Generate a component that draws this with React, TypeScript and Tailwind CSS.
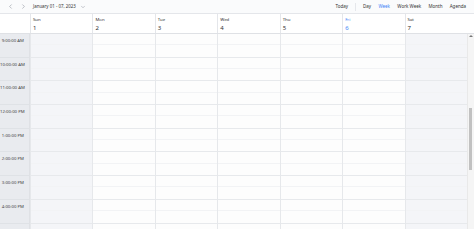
import { ChevronLeft, ChevronRight, ChevronDown } from "lucide-react";

const days = [
  { name: "Sun", date: 1, weekend: true },
  { name: "Mon", date: 2 },
  { name: "Tue", date: 3 },
  { name: "Wed", date: 4 },
  { name: "Thu", date: 5 },
  { name: "Fri", date: 6, today: true },
  { name: "Sat", date: 7, weekend: true },
];

const hours = [
  "9:00:00 AM",
  "10:00:00 AM",
  "11:00:00 AM",
  "12:00:00 PM",
  "1:00:00 PM",
  "2:00:00 PM",
  "3:00:00 PM",
  "4:00:00 PM",
  "",
];

const views = ["Day", "Week", "Work Week", "Month", "Agenda"];

export default function App() {
  return (
    <div className="w-[474px] h-[229px] overflow-hidden bg-white text-[#333] font-['Noto_Sans',sans-serif] flex flex-col">
      {/* Toolbar */}
      <div className="h-[14px] shrink-0 flex items-center border-b border-[#e4e6ea] bg-[#fafbfc]">
        <div className="flex items-center pl-[7px] gap-[6px] text-[#6b7280]">
          <ChevronLeft size={7} strokeWidth={1.5} />
          <ChevronRight size={7} strokeWidth={1.5} />
        </div>
        <span className="ml-[6px] text-[4.4px] leading-none">January 01 - 07, 2023</span>
        <ChevronDown size={6} strokeWidth={1.5} className="ml-[4px] text-[#6b7280]" />
        <div className="ml-auto flex items-center text-[4.5px] leading-none pr-[8px]">
          <span className="mr-[7px]">Today</span>
          <span className="w-px h-[8px] bg-[#e5e7eb] mr-[7px]" />
          <div className="flex items-center gap-[7.3px]">
            {views.map((v) => (
              <span key={v} className={v === "Week" ? "text-[#3b82f6]" : ""}>
                {v}
              </span>
            ))}
          </div>
        </div>
      </div>

      {/* Header */}
      <div className="h-[20px] shrink-0 grid grid-cols-[30px_repeat(7,1fr)_7px] border-b border-[#dfe1e5]">
        <div />
        {days.map((d) => (
          <div
            key={d.name}
            className={`border-l border-[#e4e6ea] pl-[2px] pt-[3px] flex flex-col ${d.today ? "text-[#3b82f6]" : ""}`}
          >
            <span className="text-[4.3px] leading-none">{d.name}</span>
            <span className="text-[6px] leading-none mt-[4px]">{d.date}</span>
          </div>
        ))}
        <div />
      </div>

      {/* Body */}
      <div className="flex-1 min-h-0 grid grid-cols-[30px_repeat(7,1fr)_7px] overflow-hidden">
        <div className="bg-[#e9ebef] border-r border-[#dfe1e5]">
          {hours.map((h, i) => (
            <div key={i} className="h-[23.7px] pt-[4px] pr-[5px] text-right whitespace-nowrap text-[4.3px] leading-none text-[#444] border-b border-[#dfe2e6]">
              {h}
            </div>
          ))}
        </div>
        {days.map((d) => (
          <div
            key={d.name}
            className={`border-l border-[#e6e8eb] ${d.weekend ? "bg-[#f4f5f8]" : "bg-[#fdfdfd]"}`}
          >
            {hours.map((_, i) => (
              <div key={i} className="h-[23.7px] flex flex-col border-b border-[#e7e9ec]">
                <div className="h-1/2 border-b border-[#f2f3f5]" />
                <div className="h-1/2" />
              </div>
            ))}
          </div>
        ))}
        <div className="bg-[#f5f5f5] relative border-l border-[#e9e9e9]">
          <div className="absolute left-[1px] top-[1px] w-0 h-0 border-l-[2px] border-r-[2px] border-b-[2px] border-l-transparent border-r-transparent border-b-[#777]" />
          <div className="absolute left-[1px] right-[2px] top-[74px] h-[62px] bg-[#c1c1c1]" />
          <div className="absolute left-[1px] bottom-[2px] w-0 h-0 border-l-[2px] border-r-[2px] border-t-[2px] border-l-transparent border-r-transparent border-t-[#777]" />
        </div>
      </div>
    </div>
  );
}
